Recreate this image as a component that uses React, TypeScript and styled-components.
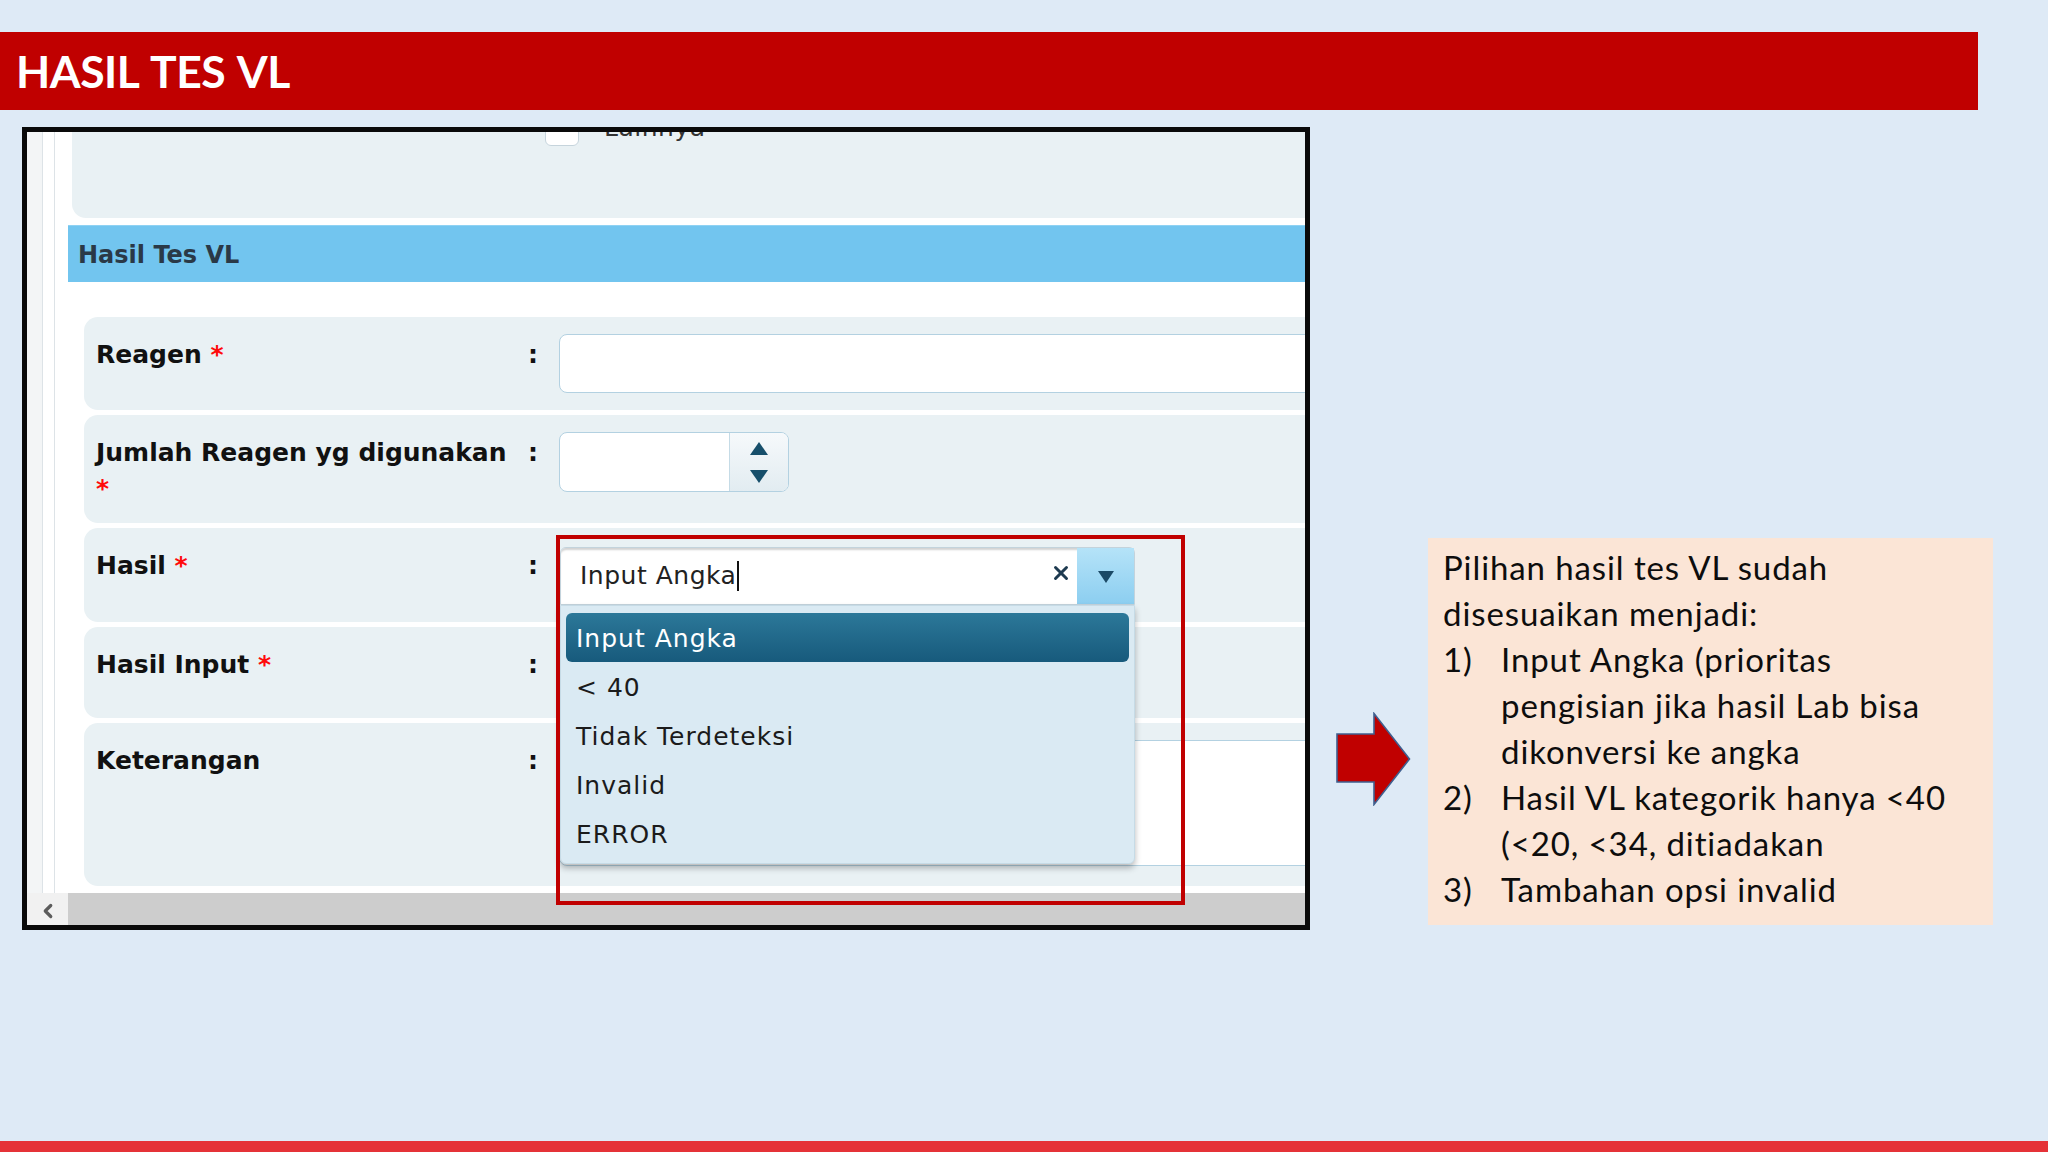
import styled, { createGlobalStyle } from "styled-components";
import { X, ChevronLeft } from "lucide-react";

const GlobalStyle = createGlobalStyle`
  html, body { margin: 0; padding: 0; }
  body {
    width: 2048px;
    height: 1152px;
    overflow: hidden;
    background: #deeaf6;
    font-family: Lato, "Liberation Sans", sans-serif;
  }
`;

const formFont = `"DejaVu Sans", "Liberation Sans", sans-serif`;

const Slide = styled.div`
  width: 2048px;
  height: 1152px;
  display: flex;
  flex-direction: column;
  background: #deeaf6;
  overflow: hidden;
`;

const TitleBar = styled.h1`
  margin: 32px 0 0;
  width: 1978px;
  height: 78px;
  box-sizing: border-box;
  padding-left: 16px;
  background: #c00000;
  color: #fff;
  font: 700 44.5px/77px Lato, sans-serif;
  letter-spacing: -0.5px;
  word-spacing: 3px;
`;

const Stage = styled.div`
  display: flex;
  align-items: flex-start;
  margin-top: 17px;
`;

const Panel = styled.div`
  position: relative;
  margin-left: 22px;
  width: 1288px;
  height: 803px;
  box-sizing: border-box;
  border: 5px solid #0a0a0a;
  background: #fff;
  display: flex;
  flex-direction: column;
`;

const Viewport = styled.div`
  height: 761px;
  display: flex;
`;

const Gutter = styled.div`
  width: 41px;
  flex: none;
  background: linear-gradient(
    to right,
    #f3f5f6 0 15px,
    #dde3e7 15px 16px,
    #fff 16px 27px,
    #dde3e7 27px 28px,
    #fff 28px
  );
`;

const Content = styled.div`
  flex: 1;
  overflow: hidden;
  display: flex;
  flex-direction: column;
  background: #fff;
`;

const TopCard = styled.div`
  margin-left: 4px;
  height: 86px;
  flex: none;
  background: #e9f1f4;
  border-bottom-left-radius: 14px;
  overflow: hidden;
  display: flex;
  align-items: flex-start;
  padding-left: 473px;
`;

const CheckBox = styled.div`
  width: 34px;
  height: 34px;
  margin-top: -20px;
  box-sizing: border-box;
  border: 1px solid #c6d4dc;
  border-radius: 6px;
  background: #fff;
`;

const CheckText = styled.span`
  margin: -19px 0 0 25px;
  font: 400 25px/30px ${formFont};
  letter-spacing: 0.5px;
  color: #333;
`;

const SectionHeader = styled.div`
  margin-top: 7px;
  height: 57px;
  padding: 2px 0 0 10px;
  flex: none;
  box-sizing: border-box;
  background: #72c5ef;
  border-top: 1px solid #8fd2f3;
  font: 700 24px/54px ${formFont};
  color: #2a3947;
`;

const Form = styled.div`
  display: flex;
  flex-direction: column;
  gap: 5px;
  padding: 35px 0 0 16px;
`;

const Card = styled.div<{ $h: number }>`
  height: ${(p) => p.$h}px;
  flex: none;
  box-sizing: border-box;
  padding: 17px 0 0 12px;
  background: #e9f1f4;
  border-radius: 14px 0 0 14px;
  display: grid;
  grid-template-columns: 432px 31px 1fr;
  align-items: start;
`;

const Label = styled.div`
  padding-top: 3px;
  font: 700 25px/36px ${formFont};
  color: #111;
`;

const Req = styled.span`
  color: #ff0a0a;
`;

const Colon = styled(Label)``;

const TextBox = styled.div<{ $w: number; $h: number }>`
  width: ${(p) => p.$w}px;
  height: ${(p) => p.$h}px;
  box-sizing: border-box;
  border: 1px solid #b3d1e1;
  border-radius: 8px;
  background: #fff;
`;

const Spinner = styled.div`
  width: 230px;
  height: 60px;
  box-sizing: border-box;
  border: 1px solid #b3d1e1;
  border-radius: 8px;
  background: #fff;
  display: flex;
  overflow: hidden;
`;

const SpinInput = styled.div`
  flex: 1;
`;

const SpinButtons = styled.div`
  width: 58px;
  border-left: 1px solid #c5dbe6;
  background: linear-gradient(#f6f9fb, #e2ecf1);
  display: flex;
  flex-direction: column;
  align-items: center;
  justify-content: center;
  gap: 15px;
`;

const Tri = styled.div<{ $up?: boolean }>`
  width: 0;
  height: 0;
  border-left: 9px solid transparent;
  border-right: 9px solid transparent;
  ${(p) =>
    p.$up
      ? "border-bottom: 13px solid #174f6b;"
      : "border-top: 13px solid #174f6b;"}
`;

const SelectWrap = styled.div`
  position: relative;
  margin: 2px 0 0 1px;
  width: 575px;
  height: 58px;
  box-sizing: border-box;
  border: 1px solid #c3d3dc;
  border-radius: 6px 6px 0 0;
  background: #fff;
  box-shadow: inset 0 3px 2px -1px rgba(0, 0, 0, 0.18);
  display: flex;
  align-items: stretch;
  z-index: 2;
`;

const SelectValue = styled.div`
  flex: 1;
  padding-left: 19px;
  font: 400 25px/54px ${formFont};
  letter-spacing: 0.5px;
  color: #222;
  display: flex;
  align-items: center;
`;

const Caret = styled.span`
  display: inline-block;
  width: 2px;
  height: 30px;
  margin-left: 1px;
  background: #111;
`;

const Clear = styled.div`
  width: 32px;
  display: flex;
  align-items: center;
  justify-content: center;
  color: #1d3a50;
  padding-bottom: 6px;
`;

const DropButton = styled.div`
  width: 57px;
  background: linear-gradient(#b5e3f8, #8ccef0);
  display: flex;
  align-items: center;
  justify-content: center;
`;

const DropTri = styled.div`
  width: 0;
  height: 0;
  margin-top: 2px;
  border-left: 8px solid transparent;
  border-right: 8px solid transparent;
  border-top: 12px solid #1b4a66;
`;

const Menu = styled.ul`
  position: absolute;
  top: 57px;
  left: -1px;
  width: 575px;
  margin: 0;
  padding: 7px 5px 5px;
  box-sizing: border-box;
  list-style: none;
  background: #daeaf3;
  border: 1px solid #c6dbe6;
  border-radius: 0 0 6px 6px;
  box-shadow: 0 4px 6px rgba(0, 0, 0, 0.28);
`;

const Option = styled.li<{ $active?: boolean }>`
  height: 49px;
  box-sizing: border-box;
  padding: 3px 0 0 10px;
  font: 400 25px/46px ${formFont};
  letter-spacing: 1px;
  border-radius: 6px;
  color: ${(p) => (p.$active ? "#fff" : "#1b1b1b")};
  background: ${(p) =>
    p.$active ? "linear-gradient(#2c7899, #175a7c)" : "transparent"};
`;

const Highlight = styled.div`
  position: absolute;
  left: 529px;
  top: 403px;
  width: 629px;
  height: 370px;
  box-sizing: border-box;
  border: 4px solid #c00000;
  pointer-events: none;
  z-index: 3;
`;

const ScrollBar = styled.div`
  height: 32px;
  display: flex;
  background: #cdcdcd;
`;

const ScrollButton = styled.div`
  width: 41px;
  background: #f1f1f1;
  display: flex;
  align-items: center;
  justify-content: center;
  padding-top: 4px;
  box-sizing: border-box;
  color: #5c5c5c;
`;

const Arrow = styled.svg`
  flex: none;
  margin: 585px 0 0 25px;
  width: 76px;
  height: 94px;
`;

const Note = styled.div`
  flex: none;
  margin: 411px 0 0 17px;
  width: 565px;
  height: 387px;
  box-sizing: border-box;
  padding: 6px 0 0 15px;
  background: #fbe5d6;
  font: 400 33px/46px Lato, "Liberation Sans", sans-serif;
  letter-spacing: 0.9px;
  color: #0d0d0d;
  white-space: nowrap;
`;

const NoteList = styled.ol`
  margin: 0;
  padding: 0;
  list-style: none;
`;

const NoteItem = styled.li`
  display: grid;
  grid-template-columns: 58px 1fr;
`;

const BottomStrip = styled.div`
  margin-top: auto;
  height: 11px;
  background: #e53238;
`;

const options = ["Input Angka", "< 40", "Tidak Terdeteksi", "Invalid", "ERROR"];

const notes: { n: string; lines: string[] }[] = [
  {
    n: "1)",
    lines: ["Input Angka (prioritas", "pengisian jika hasil Lab bisa", "dikonversi ke angka"],
  },
  { n: "2)", lines: ["Hasil VL kategorik hanya <40", "(<20, <34, ditiadakan"] },
  { n: "3)", lines: ["Tambahan opsi invalid"] },
];

export default function App() {
  return (
    <>
      <GlobalStyle />
      <Slide>
        <TitleBar>HASIL TES VL</TitleBar>
        <Stage>
          <Panel>
            <Viewport>
              <Gutter />
              <Content>
                <TopCard>
                  <CheckBox />
                  <CheckText>Lainnya</CheckText>
                </TopCard>
                <SectionHeader>Hasil Tes VL</SectionHeader>
                <Form>
                  <Card $h={93}>
                    <Label>
                      Reagen <Req>*</Req>
                    </Label>
                    <Colon>:</Colon>
                    <TextBox $w={800} $h={59} />
                  </Card>
                  <Card $h={108}>
                    <Label>
                      Jumlah Reagen yg digunakan <Req>*</Req>
                    </Label>
                    <Colon>:</Colon>
                    <Spinner>
                      <SpinInput />
                      <SpinButtons>
                        <Tri $up />
                        <Tri />
                      </SpinButtons>
                    </Spinner>
                  </Card>
                  <Card $h={94}>
                    <Label>
                      Hasil <Req>*</Req>
                    </Label>
                    <Colon>:</Colon>
                    <SelectWrap>
                      <SelectValue>
                        Input Angka
                        <Caret />
                      </SelectValue>
                      <Clear>
                        <X size={22} strokeWidth={3.2} />
                      </Clear>
                      <DropButton>
                        <DropTri />
                      </DropButton>
                      <Menu>
                        {options.map((o, i) => (
                          <Option key={o} $active={i === 0}>
                            {o}
                          </Option>
                        ))}
                      </Menu>
                    </SelectWrap>
                  </Card>
                  <Card $h={91}>
                    <Label>
                      Hasil Input <Req>*</Req>
                    </Label>
                    <Colon>:</Colon>
                    <TextBox $w={400} $h={59} />
                  </Card>
                  <Card $h={163}>
                    <Label>Keterangan</Label>
                    <Colon>:</Colon>
                    <TextBox $w={800} $h={126} />
                  </Card>
                </Form>
              </Content>
            </Viewport>
            <ScrollBar>
              <ScrollButton>
                <ChevronLeft size={22} strokeWidth={3.5} />
              </ScrollButton>
            </ScrollBar>
            <Highlight />
          </Panel>

          <Arrow viewBox="0 0 76 94">
            <polygon
              points="2,22 39,22 39,1.5 74.5,47 39,92.5 39,70 2,70"
              fill="#c00000"
              stroke="#3f5f8f"
              strokeWidth="1.6"
            />
          </Arrow>

          <Note>
            Pilihan hasil tes VL sudah
            <br />
            disesuaikan menjadi:
            <NoteList>
              {notes.map((item) => (
                <NoteItem key={item.n}>
                  <span>{item.n}</span>
                  <span>
                    {item.lines.map((l, i) => (
                      <span key={i}>
                        {l}
                        {i < item.lines.length - 1 && <br />}
                      </span>
                    ))}
                  </span>
                </NoteItem>
              ))}
            </NoteList>
          </Note>
        </Stage>
        <BottomStrip />
      </Slide>
    </>
  );
}
